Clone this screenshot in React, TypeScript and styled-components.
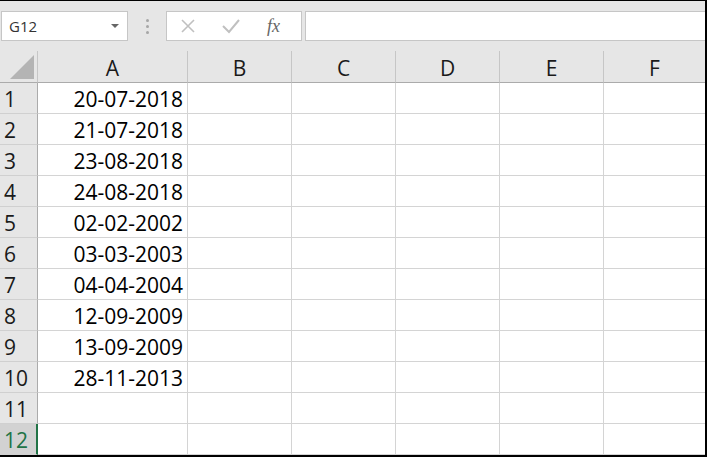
import React from "react";
import styled, { createGlobalStyle } from "styled-components";

const Global = createGlobalStyle`
  html, body { margin: 0; padding: 0; background: #fff; }
  * { box-sizing: border-box; }
`;

const Frame = styled.div`
  width: 707px;
  height: 457px;
  border-top: 1px solid #000;
  border-right: 2px solid #000;
  border-bottom: 2px solid #000;
  background: #e6e6e6;
  display: flex;
  flex-direction: column;
  overflow: hidden;
  font-family: "Open Sans", "Liberation Sans", sans-serif;
`;

const FormulaBar = styled.div`
  height: 51px;
  padding: 10px 0 0 1px;
  display: flex;
  align-items: flex-start;
`;

const NameBox = styled.div`
  width: 127px;
  height: 30px;
  background: #fff;
  border: 1px solid #c6c6c6;
  display: flex;
  align-items: center;
  justify-content: space-between;
  padding: 0 8px 0 7px;
  font-size: 15px;
  color: #333;
`;

const Arrow = styled.span`
  width: 0;
  height: 0;
  border-left: 4px solid transparent;
  border-right: 4px solid transparent;
  border-top: 4px solid #666;
`;

const Dots = styled.div`
  width: 38px;
  height: 30px;
  display: flex;
  flex-direction: column;
  align-items: center;
  justify-content: center;
  gap: 3px;
`;

const Dot = styled.span`
  width: 3px;
  height: 3px;
  border-radius: 50%;
  background: #a6a6a6;
`;

const FxBox = styled.div`
  width: 136px;
  height: 30px;
  background: #fff;
  border: 1px solid #c6c6c6;
  display: flex;
  align-items: center;
  padding: 0 0 0 12px;
  gap: 24px;
`;

const Fx = styled.span`
  font-family: "Liberation Serif", "DejaVu Serif", serif;
  font-style: italic;
  font-size: 18px;
  color: #666;
  margin-left: 2px;
`;

const FormulaInput = styled.div`
  flex: 1;
  margin-left: 3px;
  height: 30px;
  background: #fff;
  border: 1px solid #c6c6c6;
  border-right: none;
`;

const Grid = styled.div`
  display: grid;
  grid-template-columns: 38px 150px 104px 104px 104px 104px 1fr;
  grid-template-rows: 32px repeat(12, 31px);
  background: #fff;
  flex: 1;
`;

const Corner = styled.div`
  background: #e6e6e6;
  border-right: 1px solid #c6c6c6;
  border-bottom: 1px solid #ababab;
  position: relative;
`;

const ColHead = styled.div<{ $last?: boolean }>`
  background: #e6e6e6;
  border-bottom: 1px solid #ababab;
  border-right: ${(p) => (p.$last ? "none" : "1px solid #c6c6c6")};
  display: flex;
  align-items: center;
  justify-content: center;
  padding-top: 2px;
  font-size: 21px;
  color: #1a1a1a;
`;

const RowHead = styled.div<{ $sel?: boolean }>`
  background: ${(p) => (p.$sel ? "#d2d2d2" : "#e6e6e6")};
  color: ${(p) => (p.$sel ? "#217346" : "#1a1a1a")};
  border-bottom: 1px solid #d0d0d0;
  border-right: ${(p) => (p.$sel ? "2px solid #217346" : "1px solid #ababab")};
  display: flex;
  align-items: center;
  padding: 2px 0 0 4px;
  font-size: 21px;
`;

const Cell = styled.div<{ $last?: boolean }>`
  border-bottom: 1px solid #d4d4d4;
  border-right: ${(p) => (p.$last ? "none" : "1px solid #d4d4d4")};
  display: flex;
  align-items: center;
  justify-content: flex-end;
  padding: 2px 4px 0 0;
  font-size: 21px;
  color: #000;
`;

const dates = [
  "20-07-2018",
  "21-07-2018",
  "23-08-2018",
  "24-08-2018",
  "02-02-2002",
  "03-03-2003",
  "04-04-2004",
  "12-09-2009",
  "13-09-2009",
  "28-11-2013",
  "",
  "",
];

const cols = ["A", "B", "C", "D", "E", "F"];

export default function App() {
  return (
    <>
      <Global />
      <Frame>
        <FormulaBar>
          <NameBox>
            <span>G12</span>
            <Arrow />
          </NameBox>
          <Dots>
            <Dot />
            <Dot />
            <Dot />
          </Dots>
          <FxBox>
            <svg width="18" height="18" viewBox="0 0 18 18">
              <path d="M3 3 L15 15 M15 3 L3 15" stroke="#c0c0c0" strokeWidth="1.6" fill="none" />
            </svg>
            <svg width="20" height="18" viewBox="0 0 20 18">
              <path d="M2 9 L8 15 L18 3" stroke="#c0c0c0" strokeWidth="2" fill="none" />
            </svg>
            <Fx>fx</Fx>
          </FxBox>
          <FormulaInput />
        </FormulaBar>
        <Grid>
          <Corner>
            <svg
              width="24"
              height="24"
              viewBox="0 0 24 24"
              style={{ position: "absolute", right: 3, bottom: 3 }}
            >
              <polygon points="24,0 24,24 0,24" fill="#b4b4b4" />
            </svg>
          </Corner>
          {cols.map((c, i) => (
            <ColHead key={c} $last={i === cols.length - 1}>
              {c}
            </ColHead>
          ))}
          {dates.map((d, r) => (
            <React.Fragment key={r}>
              <RowHead $sel={r === 11}>{r + 1}</RowHead>
              {cols.map((c, i) => (
                <Cell key={c} $last={i === cols.length - 1}>
                  {i === 0 ? d : ""}
                </Cell>
              ))}
            </React.Fragment>
          ))}
        </Grid>
      </Frame>
    </>
  );
}
